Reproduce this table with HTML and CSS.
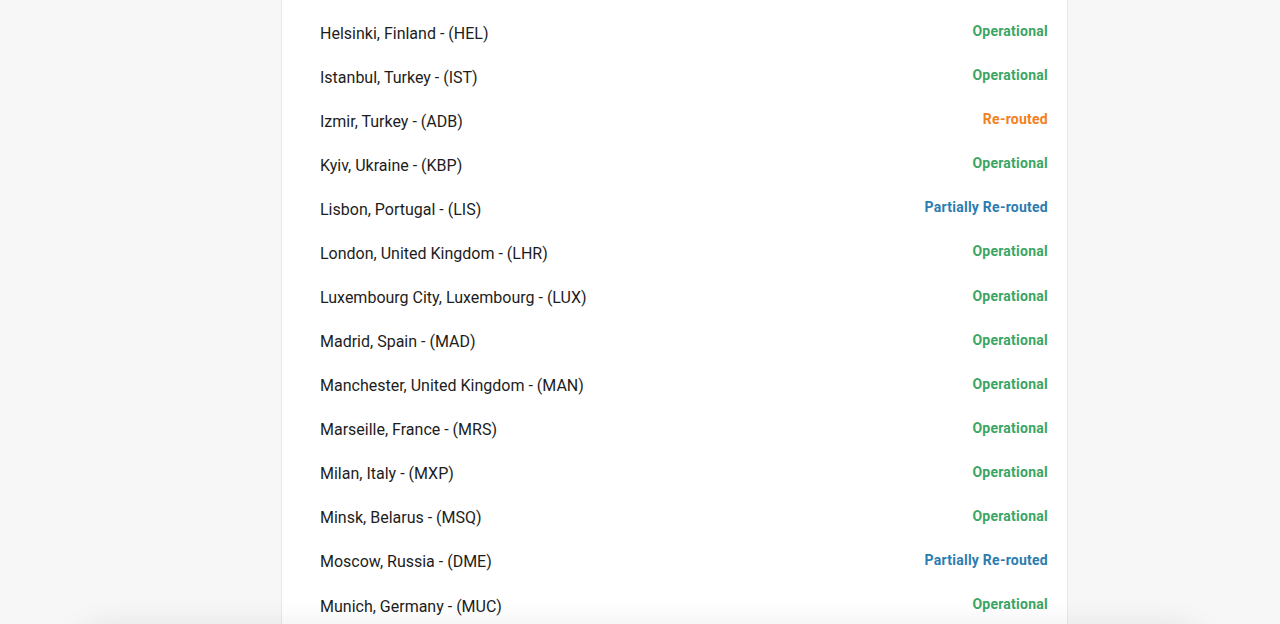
FILE: index.html
```html
<!DOCTYPE html>
<html>
<head>
<meta charset="utf-8">
<link rel="stylesheet" href="styles.css">
</head>
<body>
<div class="page">
  <div class="card">
    <div class="row"><span class="name">Helsinki, Finland - (HEL)</span><span class="status ok">Operational</span></div>
    <div class="row"><span class="name">Istanbul, Turkey - (IST)</span><span class="status ok">Operational</span></div>
    <div class="row"><span class="name">Izmir, Turkey - (ADB)</span><span class="status rr">Re-routed</span></div>
    <div class="row"><span class="name">Kyiv, Ukraine - (KBP)</span><span class="status ok">Operational</span></div>
    <div class="row"><span class="name">Lisbon, Portugal - (LIS)</span><span class="status prr">Partially Re-routed</span></div>
    <div class="row"><span class="name">London, United Kingdom - (LHR)</span><span class="status ok">Operational</span></div>
    <div class="row"><span class="name">Luxembourg City, Luxembourg - (LUX)</span><span class="status ok">Operational</span></div>
    <div class="row"><span class="name">Madrid, Spain - (MAD)</span><span class="status ok">Operational</span></div>
    <div class="row"><span class="name">Manchester, United Kingdom - (MAN)</span><span class="status ok">Operational</span></div>
    <div class="row"><span class="name">Marseille, France - (MRS)</span><span class="status ok">Operational</span></div>
    <div class="row"><span class="name">Milan, Italy - (MXP)</span><span class="status ok">Operational</span></div>
    <div class="row"><span class="name">Minsk, Belarus - (MSQ)</span><span class="status ok">Operational</span></div>
    <div class="row"><span class="name">Moscow, Russia - (DME)</span><span class="status prr">Partially Re-routed</span></div>
    <div class="row"><span class="name">Munich, Germany - (MUC)</span><span class="status ok">Operational</span></div>
  </div>
</div>
<div class="footer-shadow"></div>
</body>
</html>
```

FILE: styles.css
```css
html, body {
  margin: 0;
  padding: 0;
  background: #f7f7f7;
  height: 624px;
  overflow: hidden;
}
body {
  font-family: Roboto, "Liberation Sans", sans-serif;
  color: #1d1d1d;
}
.page {
  display: flex;
  padding-left: 281px;
}
.card {
  width: 787px;
  background: #fff;
  border-left: 1px solid #e8e8e8;
  border-right: 1px solid #e8e8e8;
  padding: 11px 19px 0 38px;
  box-sizing: border-box;
}
.row {
  height: 44.08px;
  display: flex;
  justify-content: space-between;
  align-items: center;
}
.name {
  font-size: 16px;
}
.status {
  font-size: 14px;
  font-weight: 700;
  letter-spacing: 0.25px;
  margin-top: -4px;
}
.ok { color: #3aa565; }
.rr { color: #f38020; }
.prr { color: #2c7cb0; }
.footer-shadow {
  position: fixed;
  left: 70px;
  right: 70px;
  top: 630px;
  height: 100px;
  border-radius: 40px;
  box-shadow: 0 -6px 30px rgba(0,0,0,0.08);
  background: #fff;
}
```
